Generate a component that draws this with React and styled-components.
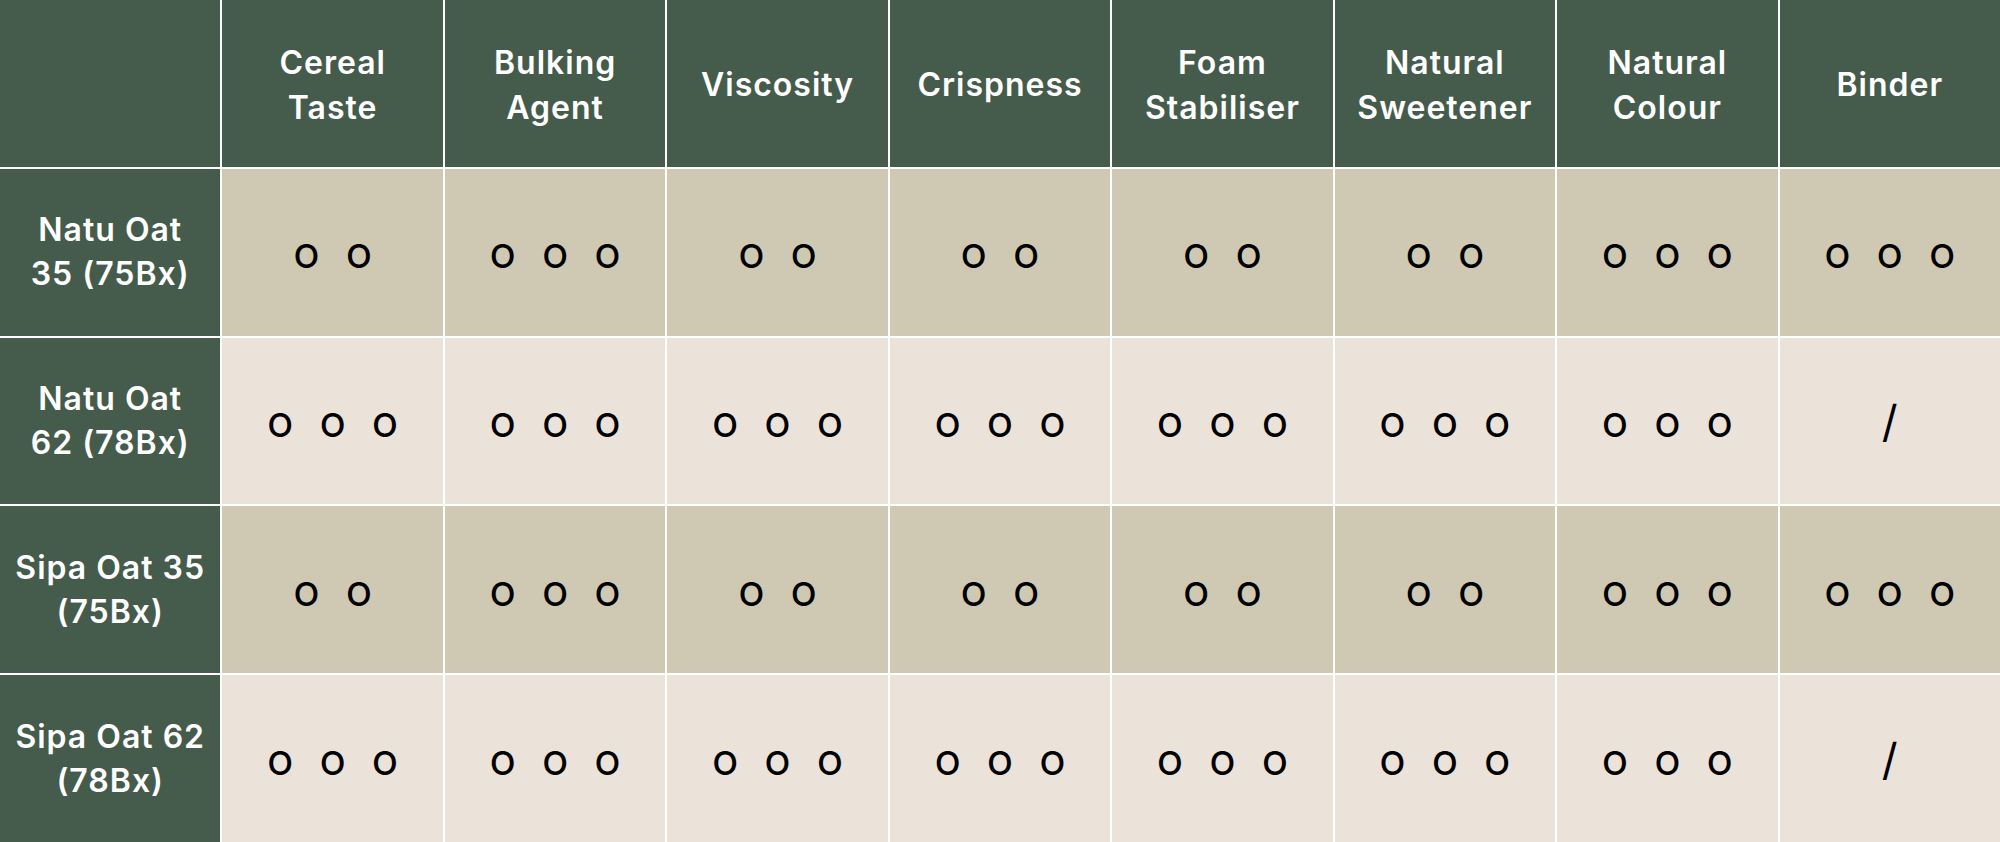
import React from "react";
import styled, { createGlobalStyle } from "styled-components";

const Global = createGlobalStyle`
  html, body { margin: 0; padding: 0; background: #ffffff; }
  body { font-family: "Inter", "Liberation Sans", sans-serif; }
`;

const Table = styled.div`
  display: grid;
  grid-template-columns: repeat(9, 1fr);
  grid-template-rows: repeat(5, 1fr);
  gap: 2px;
  width: 2000px;
  height: 842px;
  background: #ffffff;
`;

const HeadCell = styled.div`
  background: #455b4b;
  color: #ffffff;
  display: flex;
  align-items: center;
  justify-content: center;
  text-align: center;
  box-sizing: border-box;
  padding-top: ${(p) => (p.$column ? "3px" : "0")};
  font-family: "Inter", "Liberation Sans", sans-serif;
  font-weight: 600;
  font-size: 32px;
  line-height: ${(p) => (p.$column ? "45px" : "44px")};
  letter-spacing: 1px;
`;

const ValueCell = styled.div`
  background: ${(p) => (p.$alt ? "#ebe3da" : "#cfc9b4")};
  color: #000000;
  display: flex;
  align-items: center;
  justify-content: center;
  gap: 26px;
  font-family: "Inter", "Liberation Sans", sans-serif;
  font-weight: 400;
  font-size: 44px;
  line-height: 1;
`;

const Mark = styled.span`
  display: inline-block;
`;

const headers = [
  ["Cereal", "Taste"],
  ["Bulking", "Agent"],
  ["Viscosity"],
  ["Crispness"],
  ["Foam", "Stabiliser"],
  ["Natural", "Sweetener"],
  ["Natural", "Colour"],
  ["Binder"],
];

const rows = [
  { name: ["Natu Oat", "35 (75Bx)"], values: [2, 3, 2, 2, 2, 2, 3, 3] },
  { name: ["Natu Oat", "62 (78Bx)"], values: [3, 3, 3, 3, 3, 3, 3, "/"] },
  { name: ["Sipa Oat 35", "(75Bx)"], values: [2, 3, 2, 2, 2, 2, 3, 3] },
  { name: ["Sipa Oat 62", "(78Bx)"], values: [3, 3, 3, 3, 3, 3, 3, "/"] },
];

const Lines = ({ lines }) => (
  <span>
    {lines.map((l, i) => (
      <React.Fragment key={i}>
        {i > 0 && <br />}
        {l}
      </React.Fragment>
    ))}
  </span>
);

export default function App() {
  return (
    <>
      <Global />
      <Table>
        <HeadCell $column />
        {headers.map((h, i) => (
          <HeadCell key={i} $column>
            <Lines lines={h} />
          </HeadCell>
        ))}
        {rows.map((r, ri) => (
          <React.Fragment key={ri}>
            <HeadCell>
              <Lines lines={r.name} />
            </HeadCell>
            {r.values.map((v, vi) => (
              <ValueCell key={vi} $alt={ri % 2 === 1}>
                {v === "/" ? (
                  <Mark>/</Mark>
                ) : (
                  Array.from({ length: v }).map((_, k) => <Mark key={k}>o</Mark>)
                )}
              </ValueCell>
            ))}
          </React.Fragment>
        ))}
      </Table>
    </>
  );
}
